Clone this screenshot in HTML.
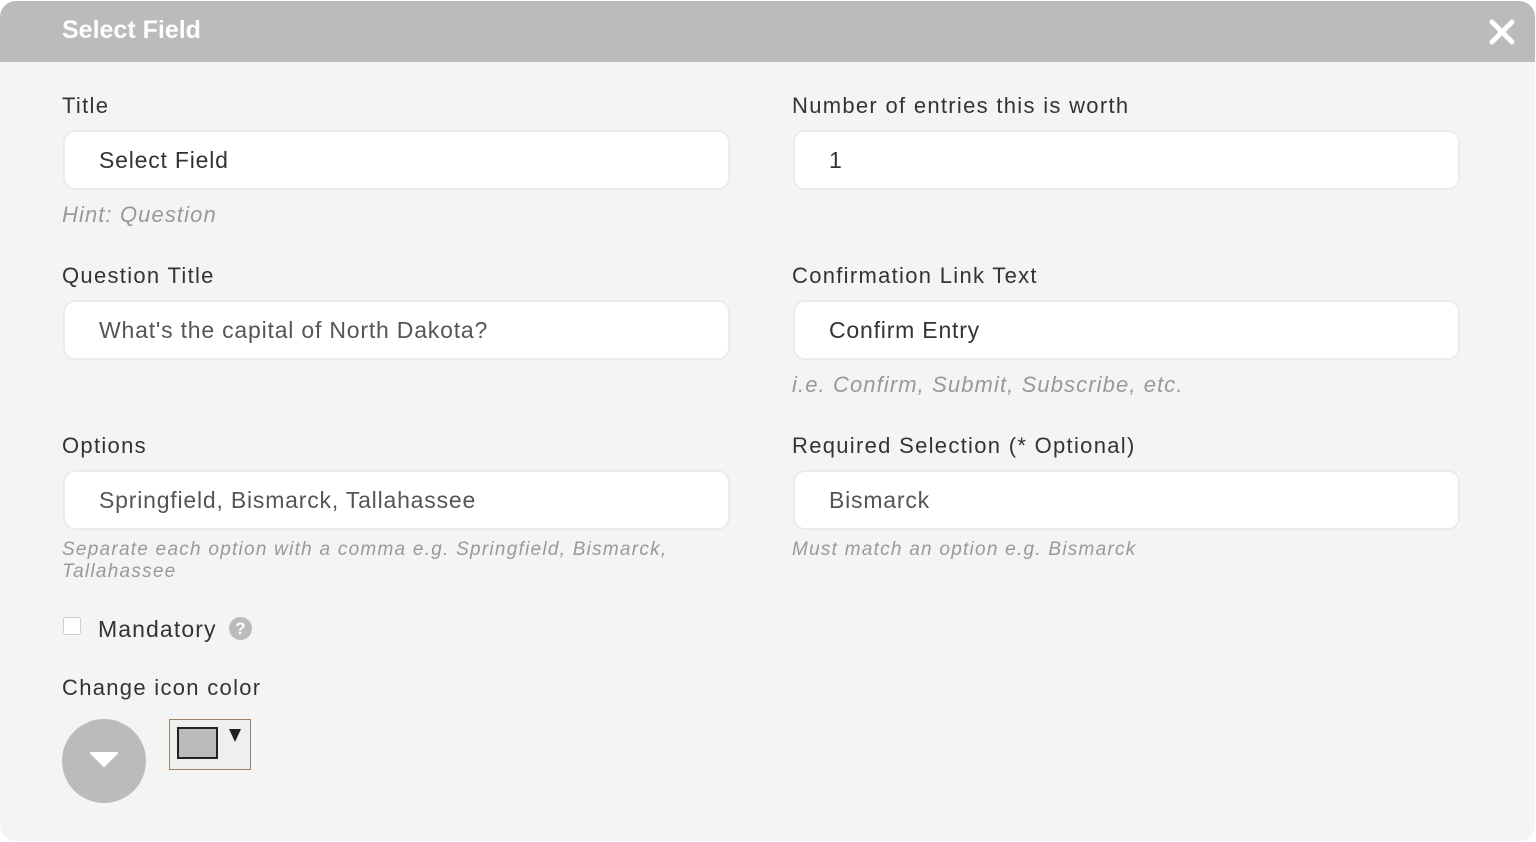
<!DOCTYPE html>
<html><head><style>
body{margin:0;width:1536px;height:842px;background:#fff;font-family:"Liberation Sans",sans-serif;overflow:hidden;position:relative}
.panel{position:absolute;left:0;top:1px;width:1535px;height:840px;background:#f4f4f4;border-radius:16px;overflow:hidden}
.hdr{position:absolute;left:0;top:0;width:100%;height:61px;background:#bbbbbb}
.hdr span{position:absolute;left:62px;top:15px;color:#fff;font-size:25px;font-weight:bold}
.x{position:absolute;left:1488px;top:17px}
.lbl{position:absolute;font-size:22px;color:#333;letter-spacing:1.3px}
.inp{position:absolute;width:663px;height:56px;background:#fff;border:2px solid #ebebeb;border-radius:12px;box-sizing:content-box}
.inp span{position:absolute;left:34px;top:15px;font-size:23px;color:#333;letter-spacing:0.8px}
.inp span.ph{color:#555}
.hint{position:absolute;font-style:italic;color:#999;letter-spacing:1.1px}
</style></head><body>
<div class="panel">
<div class="hdr"><span>Select Field</span>
<svg class="x" width="28" height="28" viewBox="0 0 28 28"><path d="M4 4L24 24M24 4L4 24" stroke="#fff" stroke-width="5" stroke-linecap="round"/></svg></div>

<div class="lbl" style="left:62px;top:92px">Title</div>
<div class="inp" style="left:63px;top:129px"><span>Select Field</span></div>
<div class="hint" style="left:62px;top:201px;font-size:22px">Hint: Question</div>

<div class="lbl" style="left:792px;top:92px">Number of entries this is worth</div>
<div class="inp" style="left:793px;top:129px"><span>1</span></div>

<div class="lbl" style="left:62px;top:262px">Question Title</div>
<div class="inp" style="left:63px;top:299px"><span class="ph">What's the capital of North Dakota?</span></div>

<div class="lbl" style="left:792px;top:262px">Confirmation Link Text</div>
<div class="inp" style="left:793px;top:299px"><span>Confirm Entry</span></div>
<div class="hint" style="left:792px;top:371px;font-size:22px">i.e. Confirm, Submit, Subscribe, etc.</div>

<div class="lbl" style="left:62px;top:432px">Options</div>
<div class="inp" style="left:63px;top:469px"><span class="ph">Springfield, Bismarck, Tallahassee</span></div>
<div class="hint" style="left:62px;top:538px;font-size:19px;line-height:22px;width:620px;letter-spacing:1.25px">Separate each option with a comma e.g. Springfield, Bismarck, Tallahassee</div>

<div class="lbl" style="left:792px;top:432px">Required Selection (* Optional)</div>
<div class="inp" style="left:793px;top:469px"><span class="ph">Bismarck</span></div>
<div class="hint" style="left:792px;top:538px;font-size:19px;letter-spacing:1.25px">Must match an option e.g. Bismarck</div>

<div style="position:absolute;left:63px;top:616px;width:16px;height:16px;border:1px solid #ccc;border-radius:3px;background:#fff"></div>
<div class="lbl" style="left:98px;top:615px;font-size:23px;letter-spacing:1.1px">Mandatory</div>
<div style="position:absolute;left:229px;top:616px;width:23px;height:23px;border-radius:50%;background:#bbb;color:#fff;font-weight:bold;font-size:17px;text-align:center;line-height:23px">?</div>

<div class="lbl" style="left:62px;top:674px">Change icon color</div>
<div style="position:absolute;left:62px;top:718px;width:84px;height:84px;border-radius:50%;background:#bbb"></div>
<svg style="position:absolute;left:89px;top:750px" width="30" height="18" viewBox="0 0 30 18"><path d="M2 2H28L15 15Z" fill="#fff" stroke="#fff" stroke-width="2" stroke-linejoin="round"/></svg>
<div style="position:absolute;left:169px;top:718px;width:80px;height:49px;border:1px solid #a08060;background:#efefef"></div>
<div style="position:absolute;left:177px;top:726px;width:41px;height:32px;border:2px solid #222;background:#bbb;box-sizing:border-box"></div>
<div style="position:absolute;left:229px;top:728px;width:0;height:0;border-left:6px solid transparent;border-right:6px solid transparent;border-top:13px solid #222"></div>
</div>
</body></html>
